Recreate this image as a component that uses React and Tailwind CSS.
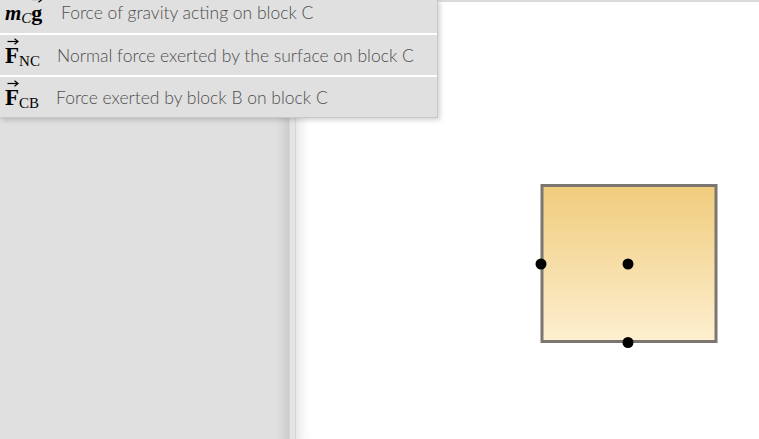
import React from 'react'

function Arrow({ className }) {
  return (
    <svg className={`absolute ${className}`} width="12" height="7" viewBox="0 0 12 7">
      <path d="M0.5 3.5H10" stroke="#000" strokeWidth="1.2" />
      <path d="M7.5 0.8L11 3.5L7.5 6.2" stroke="#000" strokeWidth="1.2" fill="none" />
    </svg>
  )
}

function VecF({ sub }) {
  return (
    <span className="inline-flex items-baseline text-black" style={{ fontFamily: '"Liberation Serif", serif' }}>
      <span className="relative font-bold text-[23px] leading-none">
        F
        <Arrow className="left-[2px] -top-[6px]" />
      </span>
      <span className="text-[15px] leading-none translate-y-[3px]">{sub}</span>
    </span>
  )
}

function MassG() {
  return (
    <span className="inline-flex items-baseline text-black" style={{ fontFamily: '"Liberation Serif", serif' }}>
      <span className="font-bold italic text-[21px] leading-none">m</span>
      <span className="italic text-[15px] leading-none translate-y-[3px]">C</span>
      <span className="relative font-bold text-[22px] leading-none">
        g
        <Arrow className="left-[0px] -top-[6px]" />
      </span>
    </span>
  )
}

const rows = [
  { math: <MassG />, text: 'Force of gravity acting on block C', pad: 'pl-[61px]', h: 'h-[35px]', ty: '-translate-y-[3px]' },
  { math: <VecF sub="NC" />, text: 'Normal force exerted by the surface on block C', pad: 'pl-[57px]', h: 'h-[42px]', ty: 'translate-y-[1px]' },
  { math: <VecF sub="CB" />, text: 'Force exerted by block B on block C', pad: 'pl-[56px]', h: 'h-[40px]', ty: 'translate-y-[1px]' },
]

export default function App() {
  return (
    <div className="relative flex w-[759px] h-[439px] overflow-hidden bg-white" style={{ fontFamily: 'Lato, "Open Sans", sans-serif' }}>
      <div className="w-[289px] h-full bg-[#e0e0e0] shadow-[inset_-14px_0_12px_-10px_rgba(0,0,0,0.12)]" />
      <div className="w-[7px] h-full bg-[#e4e4e4] border-x border-[#d6d6d6]" />
      <div className="relative flex-1 h-full bg-white border-t-2 border-[#dadada] shadow-[inset_14px_0_14px_-12px_rgba(0,0,0,0.15)]">
        <svg className="absolute left-0 top-0" width="463" height="437" viewBox="0 2 463 437">
          <defs>
            <linearGradient id="blk" x1="0" y1="0" x2="0" y2="1">
              <stop offset="0" stopColor="#f0cc7c" />
              <stop offset="1" stopColor="#fdefd0" />
            </linearGradient>
          </defs>
          <rect x="246" y="185.5" width="174" height="156" fill="url(#blk)" stroke="#7b7670" strokeWidth="3" />
          <circle cx="245" cy="264" r="5.5" fill="#000" />
          <circle cx="332" cy="264" r="5.5" fill="#000" />
          <circle cx="332" cy="342.5" r="5.5" fill="#000" />
        </svg>
      </div>

      <div className="absolute left-0 top-0 w-[438px] bg-[#e0e0e0] border-r border-b border-[#c8c8c8] shadow-[2px_2px_5px_rgba(0,0,0,0.18)]">
        {rows.map((r, i) => (
          <div key={i} className={`relative flex items-center ${r.h} ${i < rows.length - 1 ? 'border-b-2 border-white' : ''}`}>
            <div className={`flex items-center w-full ${r.ty}`}>
              <div className="absolute left-[5px]">{r.math}</div>
              <span className={`${r.pad} text-[17.5px] font-light text-[#4f4f4f]`}>{r.text}</span>
            </div>
          </div>
        ))}
      </div>
    </div>
  )
}
